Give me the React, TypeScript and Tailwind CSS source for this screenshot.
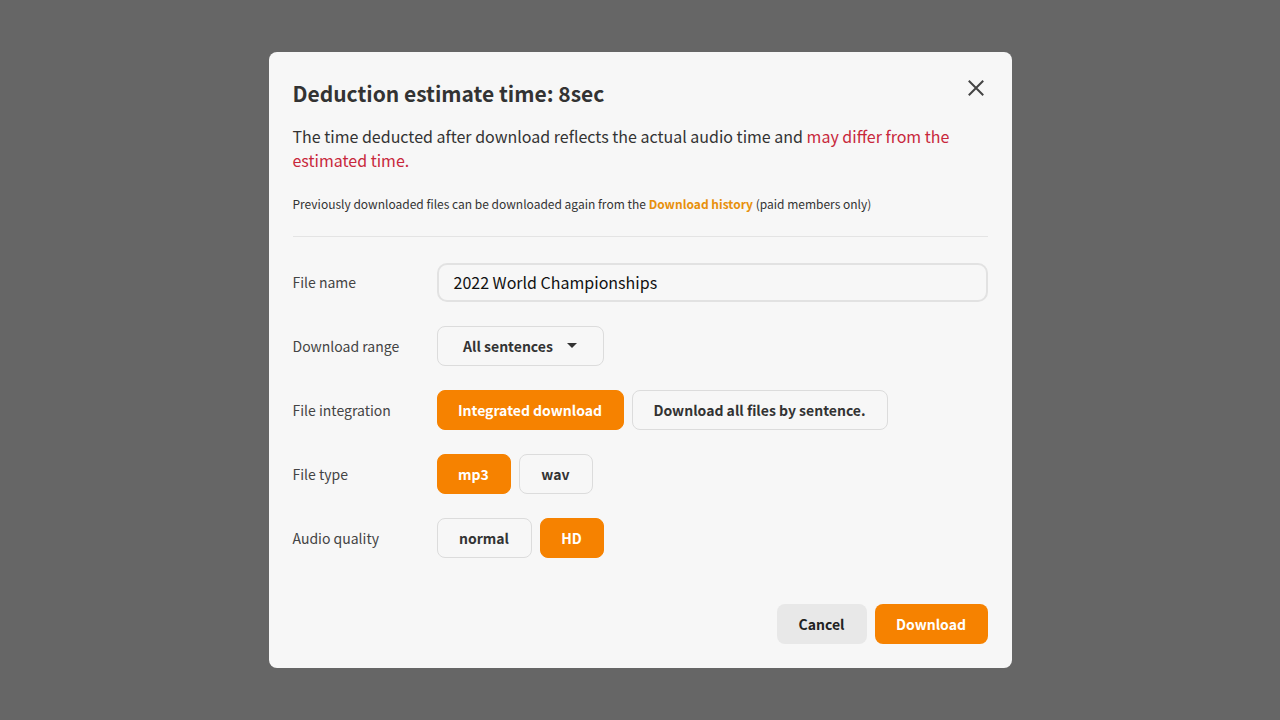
import React from "react";

const font = { fontFamily: '"Noto Sans CJK JP", "Noto Sans", sans-serif' };

function Row({ label, children }: { label: string; children: React.ReactNode }) {
  return (
    <div className="flex items-center h-[40px]">
      <div className="w-[144px] text-[14px] text-[#444]">{label}</div>
      <div className="flex-1 flex items-center gap-[8px]">{children}</div>
    </div>
  );
}

function Btn({ active, w, children }: { active?: boolean; w: string; children: React.ReactNode }) {
  return (
    <button
      className={
        "h-[40px] rounded-[8px] text-[14px] font-bold flex items-center justify-center " +
        w +
        (active
          ? " bg-[#f68200] text-white border border-[#f68200]"
          : " bg-[#f7f7f7] text-[#333] border border-[#dcdcdc]")
      }
    >
      {children}
    </button>
  );
}

export default function App() {
  return (
    <div style={font} className="w-[1280px] h-[720px] bg-[#666666] flex items-start justify-center pt-[52px]">
      <div className="w-[743px] h-[616px] bg-[#f7f7f7] rounded-[8px] px-[24px] pt-[24px] relative flex flex-col">
        <button className="absolute right-[26px] top-[26px] text-[#444]">
          <svg width="20" height="20" viewBox="0 0 20 20" fill="none" stroke="currentColor" strokeWidth="2" strokeLinecap="square">
            <path d="M3.5 3.5 L16.5 16.5 M16.5 3.5 L3.5 16.5" />
          </svg>
        </button>
        <h1 className="text-[21px] font-bold text-[#333] leading-[34px]">Deduction estimate time: 8sec</h1>
        <p className="mt-[14px] text-[16px] leading-[24px] text-[#333]">
          The time deducted after download reflects the actual audio time and{" "}
          <span className="text-[#c8283c]">may differ from the estimated time.</span>
        </p>
        <p className="mt-[23px] text-[12px] leading-[18px] text-[#333]">
          Previously downloaded files can be downloaded again from the{" "}
          <span className="text-[#e8900c] font-bold">Download history</span> (paid members only)
        </p>
        <div className="mt-[23px] h-px bg-[#e4e4e4]" />
        <div className="mt-[25px] flex flex-col gap-[24px]">
          <Row label="File name">
            <div className="flex-1 h-[39px] rounded-[10px] border-2 border-[#e2e2e2] bg-[#f7f7f7] flex items-center px-[15px] text-[16px] text-[#111]">
              2022 World Championships
            </div>
          </Row>
          <Row label="Download range">
            <button className="w-[167px] h-[40px] rounded-[8px] border border-[#dcdcdc] flex items-center justify-center gap-[14px] text-[14px] font-bold text-[#333]">
              All sentences
              <svg width="10" height="6" viewBox="0 0 10 6"><path d="M0 0 L10 0 L5 5 Z" fill="#333" /></svg>
            </button>
          </Row>
          <Row label="File integration">
            <Btn active w="w-[187px]">Integrated download</Btn>
            <Btn w="w-[256px]">Download all files by sentence.</Btn>
          </Row>
          <Row label="File type">
            <Btn active w="w-[74px]">mp3</Btn>
            <Btn w="w-[74px]">wav</Btn>
          </Row>
          <Row label="Audio quality">
            <Btn w="w-[95px]">normal</Btn>
            <Btn active w="w-[64px]">HD</Btn>
          </Row>
        </div>
        <div className="mt-auto mb-[24px] flex justify-end gap-[8px]">
          <button className="w-[90px] h-[40px] rounded-[8px] bg-[#e8e8e8] text-[14px] font-bold text-[#222]">Cancel</button>
          <button className="w-[113px] h-[40px] rounded-[8px] bg-[#f68200] text-[14px] font-bold text-white">Download</button>
        </div>
      </div>
    </div>
  );
}
